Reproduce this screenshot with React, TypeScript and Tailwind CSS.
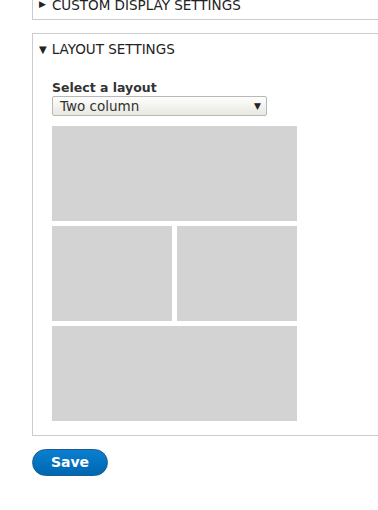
import React from "react";

export default function App() {
  const font = { fontFamily: '"DejaVu Sans", "Open Sans", sans-serif' };
  return (
    <div className="w-[378px] h-[510px] bg-white overflow-hidden text-[#333]" style={font}>
      <div className="pl-8">
        {/* collapsed fieldset */}
        <div className="h-[20px] border-l border-b border-[#ccc] relative">
          <div className="absolute left-[6px] top-[-5px] flex items-center gap-[6px] text-[13.5px] uppercase text-[#222]">
            <span className="text-[9px]">▶</span>
            <span>Custom Display Settings</span>
          </div>
        </div>
        {/* open fieldset */}
        <div className="mt-[13px] border-l border-t border-b border-[#ccc] h-[403px]">
          <div className="flex items-center gap-[5px] pl-[6px] pt-[5px] text-[13.5px] uppercase text-[#222]">
            <span className="text-[10px]">▼</span>
            <span>Layout Settings</span>
          </div>
          <div className="pl-[19px] pt-[22px]">
            <div className="text-[12.5px] font-bold leading-[14px]">Select a layout</div>
            <div className="mt-[1px] w-[215px] h-[20px] border border-[#b8b8b8] rounded-[2px] bg-gradient-to-b from-[#fefefe] to-[#e8e8e0] flex items-center justify-between pl-[7px] pr-[5px]">
              <span className="text-[13.5px] leading-none">Two column</span>
              <span className="text-[9px] text-[#222]">▼</span>
            </div>
            <div className="mt-[10px] w-[245px] flex flex-col gap-[5px]">
              <div className="h-[95px] bg-[#d3d3d3]" />
              <div className="flex gap-[5px]">
                <div className="h-[95px] w-[120px] bg-[#d3d3d3]" />
                <div className="h-[95px] w-[120px] bg-[#d3d3d3]" />
              </div>
              <div className="h-[95px] bg-[#d3d3d3]" />
            </div>
          </div>
        </div>
        <div className="mt-[13px]">
          <button className="w-[76px] h-[27px] rounded-full bg-gradient-to-b from-[#0a7fd0] to-[#0067b0] border border-[#1e5c90] text-white font-bold text-[14px] flex items-center justify-center">
            Save
          </button>
        </div>
      </div>
    </div>
  );
}
